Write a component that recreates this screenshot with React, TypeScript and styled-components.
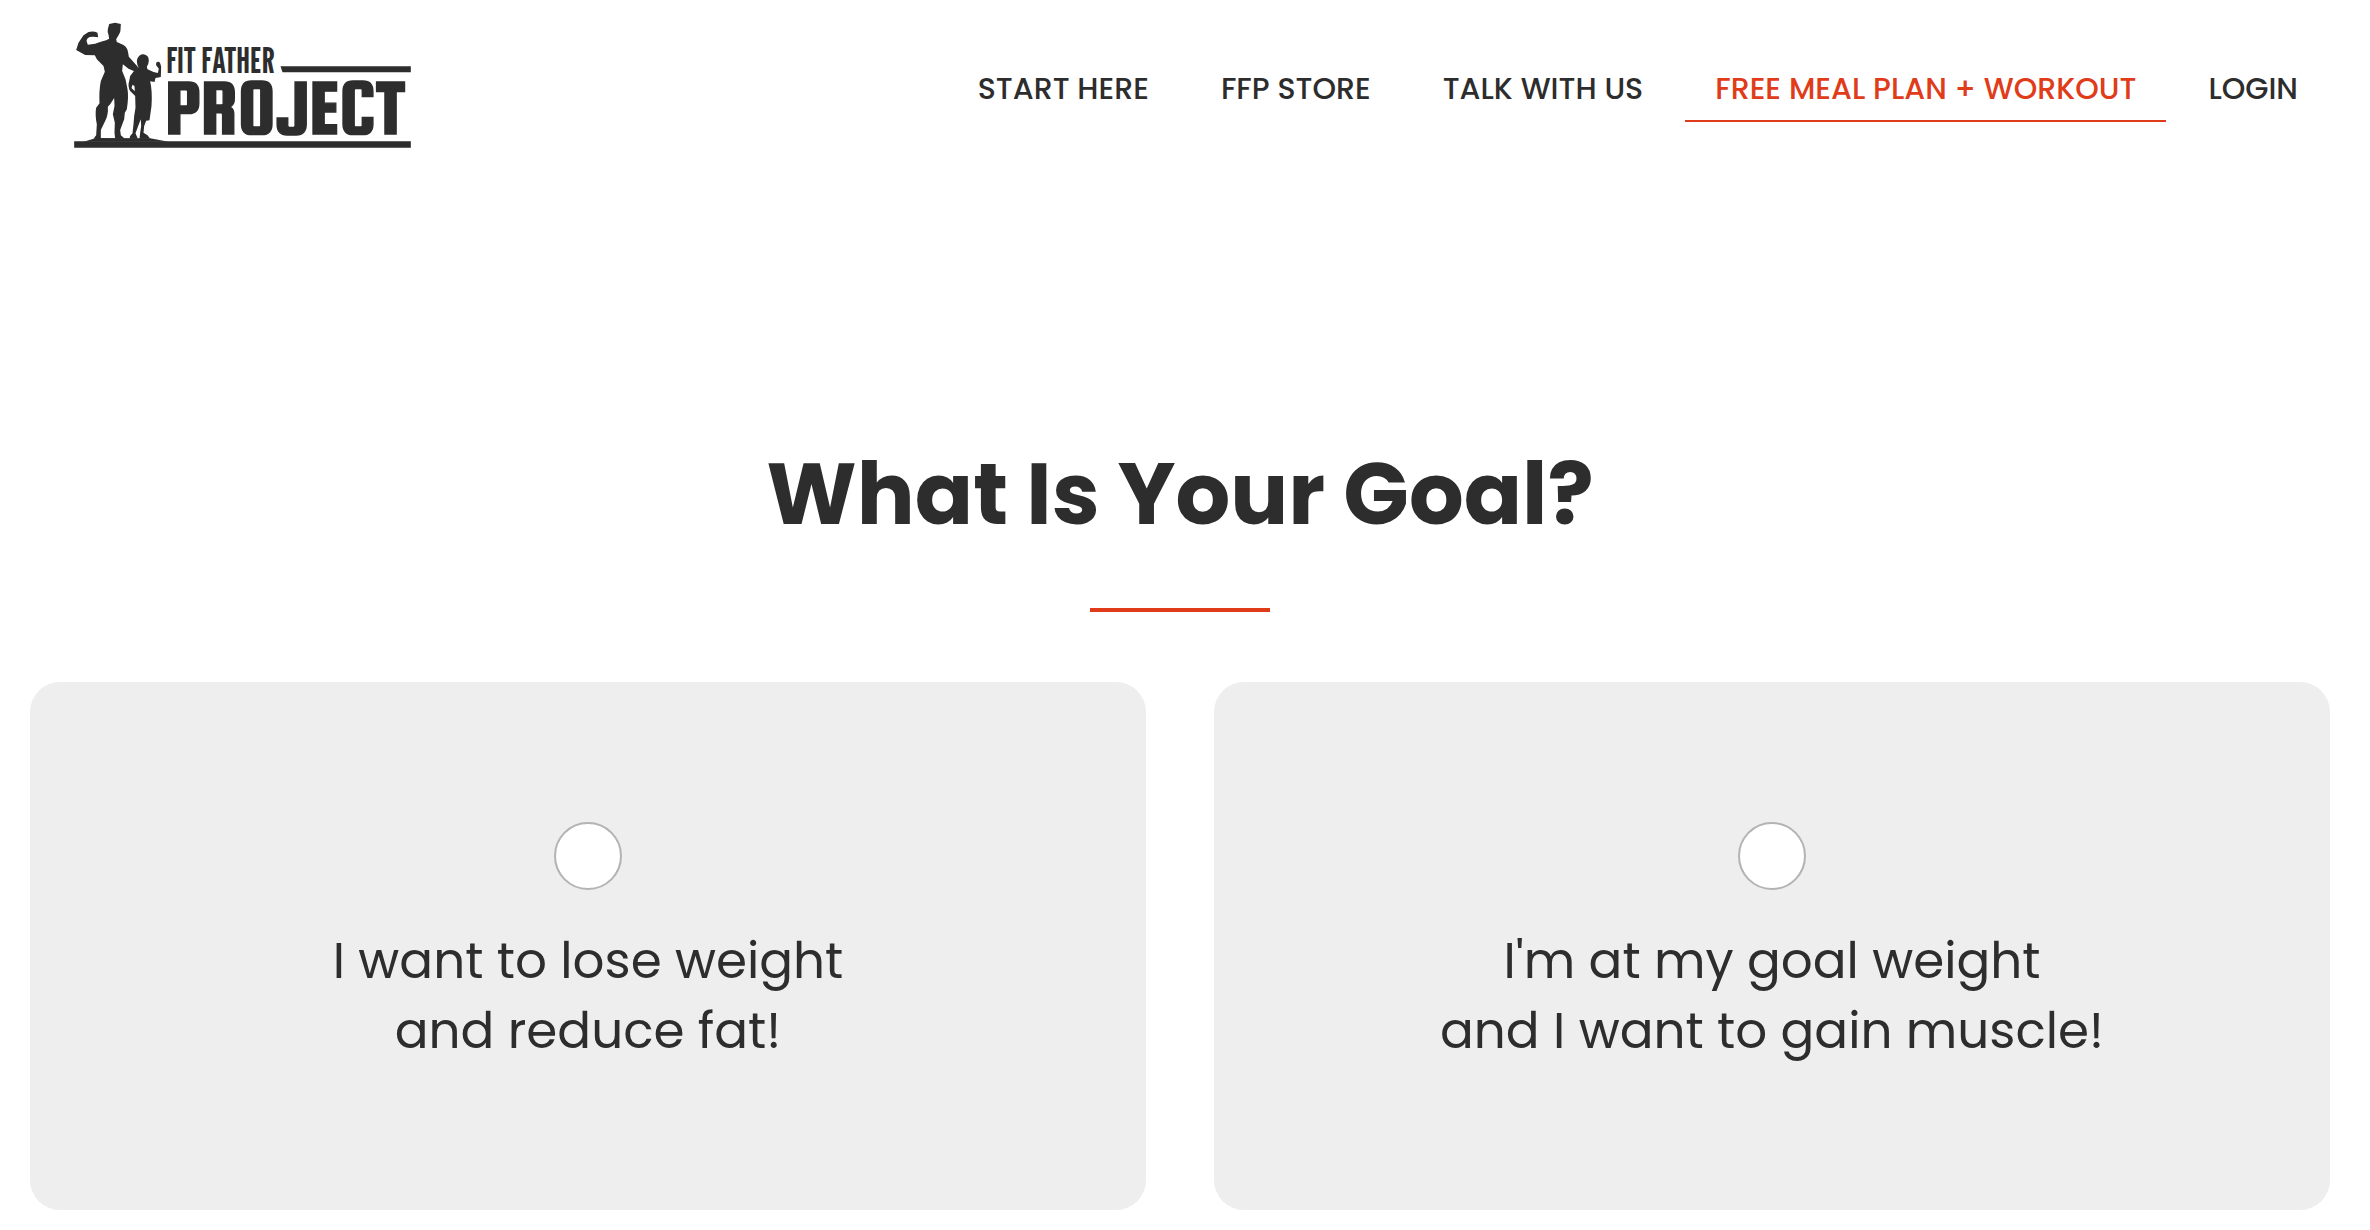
import React from "react";
import styled, { createGlobalStyle } from "styled-components";

const ink = "#2d2d2d";
const accent = "#e03c1a";

const GlobalStyle = createGlobalStyle`
  *, *::before, *::after { box-sizing: border-box; }
  body {
    margin: 0;
    background: #fff;
    color: ${ink};
    font-family: Poppins, Inter, "Open Sans", sans-serif;
  }
`;

const Page = styled.div`
  padding-right: 10px;
`;

const Header = styled.header`
  display: flex;
  justify-content: space-between;
  align-items: center;
  padding: 22px 32px 22px 74px;
`;

const LogoLink = styled.a`
  display: block;
  color: ${ink};
`;

const LogoSvg = styled.svg`
  display: block;
  width: 337px;
  height: 126px;
  overflow: visible;
  fill: currentColor;
`;

const LogoTop = styled.text`
  font-family: "League Gothic", "Bebas Neue", "Roboto Condensed", sans-serif;
  font-weight: 400;
  font-size: 108px;
`;

const LogoMain = styled.text`
  font-family: "Squada One", "Roboto Condensed", sans-serif;
  font-weight: 400;
  font-size: 240px;
  stroke: currentColor;
  stroke-width: 4px;
`;

const Nav = styled.nav`
  display: flex;
  align-items: center;
  gap: 12px;
  margin-top: 6px;
`;

const NavLink = styled.a<{ $active?: boolean }>`
  padding: 11px 30px 7px;
  border-bottom: 2px solid ${(p) => (p.$active ? accent : "transparent")};
  color: ${(p) => (p.$active ? accent : ink)};
  font-size: 30px;
  font-weight: 500;
  line-height: 48px;
  text-decoration: none;
  white-space: nowrap;
`;

const Main = styled.main`
  padding: 264px 30px 20px;
`;

const Title = styled.h1`
  margin: 0;
  font-size: 86px;
  font-weight: 700;
  line-height: 120px;
  text-align: center;
`;

const Divider = styled.hr`
  width: 180px;
  height: 4px;
  margin: 54px auto 70px;
  border: 0;
  background: ${accent};
`;

const Goals = styled.div`
  display: grid;
  grid-template-columns: 1fr 1fr;
  gap: 68px;
`;

const GoalCard = styled.label`
  display: flex;
  flex-direction: column;
  align-items: center;
  gap: 36px;
  padding: 140px 30px 144px;
  border-radius: 30px;
  background: #eee;
  font-size: 50px;
  line-height: 70px;
  text-align: center;
  cursor: pointer;
`;

const GoalRadio = styled.input`
  appearance: none;
  width: 68px;
  height: 68px;
  margin: 0;
  border: 2px solid #b3b3b3;
  border-radius: 50%;
  background: #fff;

  &:checked {
    background: ${accent};
  }
`;

const links = [
  { label: "START HERE" },
  { label: "FFP STORE" },
  { label: "TALK WITH US" },
  { label: "FREE MEAL PLAN + WORKOUT", active: true },
  { label: "LOGIN" },
];

const goals = [
  { id: "lose", lines: ["I want to lose weight", "and reduce fat!"] },
  { id: "gain", lines: ["I'm at my goal weight", "and I want to gain muscle!"] },
];

function Logo() {
  return (
    <LogoSvg viewBox="42 38 1010 378" role="img" aria-label="Fit Father Project">
      <path d="M85 68 Q100 64 112 70 L114 84 L100 82 L88 83 Q79 88 79 95 L83 106 L105 103 L122 97 L138 93 L147 88 L145 76 Q141 70 143 60 L147 44 L165 40 L182 44 L181 62 Q181 70 176 76 L168 90 L170 98 L190 107 Q203 116 204 130 L206 142 L220 158 L234 174 L226 187 L205 178 L188 165 L186 185 L196 210 L202 240 Q206 262 200 300 L194 310 L192 330 L180 362 L182 378 L194 388 L165 388 L163 370 L164 340 L158 315 L163 290 L162 266 L150 285 L143 292 Q145 315 135 335 L122 362 L122 388 L100 388 L108 378 L110 345 Q104 315 108 295 L118 282 Q116 245 122 215 L134 187 L130 170 L110 150 L104 138 L75 137 L48 122 L55 100 L70 78 Z" />
      <path
        fillRule="evenodd"
        d="M235 174 Q227 158 232 147 Q239 134 250 135 Q266 137 266 154 Q265 166 260 172 L262 180 L280 188 L293 191 L296 178 L288 168 Q286 158 294 157 Q300 156 301 165 L303 172 L302 203 L286 206 L283 218 L270 216 Q277 245 274 290 L268 333 L258 334 L252 350 L250 370 L262 378 L270 388 L238 388 L240 370 L243 350 L242 330 L234 350 L226 372 L233 388 L208 388 L210 380 L217 372 L220 345 L222 320 L226 295 L225 260 L210 245 Q202 232 207 215 L210 200 L222 184 Z M217 226 L214 236 L224 246 L223 230 Z"
      />
      <path d="M70 397 L108 386 L270 387 L325 397 Z" />
      <path d="M42 396 H1052 V415 H42 Z" />
      <path d="M661 171 H1052 V189 H667 Z" />
      <LogoTop x="318" y="190">FIT FATHER</LogoTop>
      <LogoMain x="314" y="375">PROJECT</LogoMain>
    </LogoSvg>
  );
}

export default function App() {
  return (
    <>
      <GlobalStyle />
      <Page>
        <Header>
          <LogoLink href="#" aria-label="Fit Father Project">
            <Logo />
          </LogoLink>
          <Nav>
            {links.map((l) => (
              <NavLink key={l.label} href="#" $active={l.active}>
                {l.label}
              </NavLink>
            ))}
          </Nav>
        </Header>
        <Main>
          <Title>What Is Your Goal?</Title>
          <Divider />
          <Goals role="radiogroup" aria-label="What Is Your Goal?">
            {goals.map((g) => (
              <GoalCard key={g.id} htmlFor={g.id}>
                <GoalRadio type="radio" name="goal" id={g.id} value={g.id} />
                <span>
                  {g.lines[0]}
                  <br />
                  {g.lines[1]}
                </span>
              </GoalCard>
            ))}
          </Goals>
        </Main>
      </Page>
    </>
  );
}
